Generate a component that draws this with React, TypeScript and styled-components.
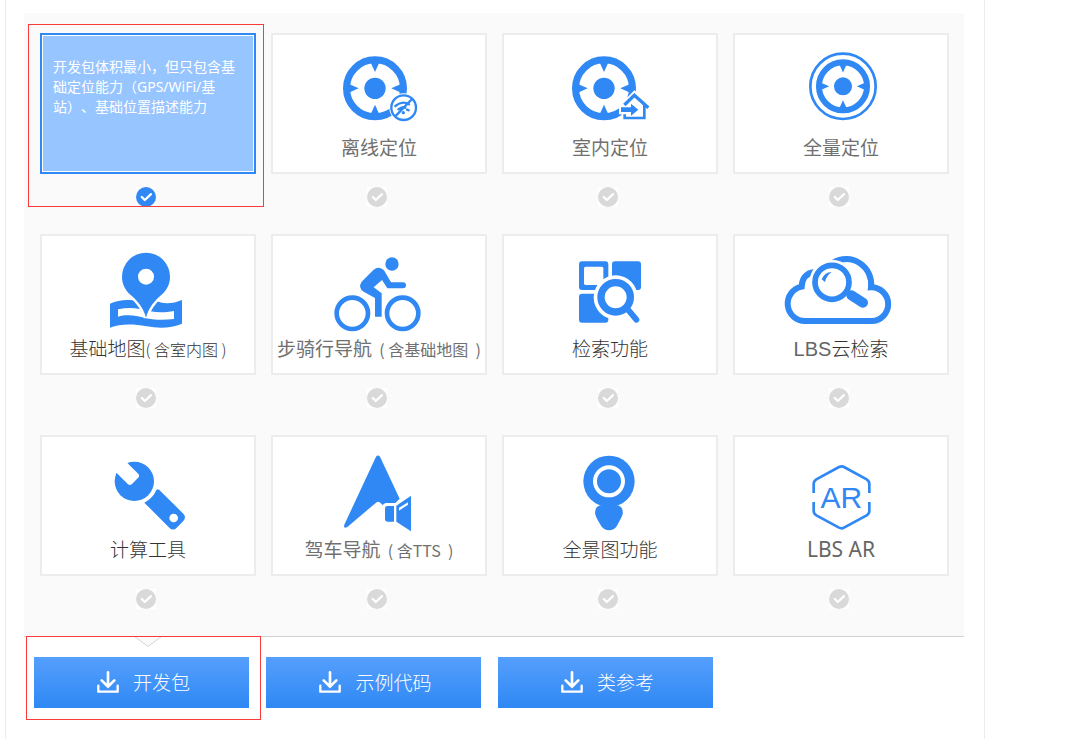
import React, { useState } from "react";
import styled, { createGlobalStyle, css } from "styled-components";

const BLUE = "#2f88f4";
const SANS = '"Noto Sans", "Noto Sans CJK SC", sans-serif';

const GlobalStyle = createGlobalStyle`
  *, *::before, *::after { box-sizing: border-box; }
  body { margin: 0; background: #fff; font-family: ${SANS}; }
`;

const Frame = styled.main`
  max-width: 980px;
  min-height: 100vh;
  margin-left: 5px;
  padding: 13px 20px 31px 18px;
  border: solid #ececec;
  border-width: 0 1px;
`;

const Panel = styled.section`
  display: grid;
  grid-template-columns: repeat(4, minmax(0, 1fr));
  gap: 27px 15px;
  padding: 20px 15px 27px 16px;
  background: #fafafa;
  border-bottom: 1px solid #d2d2d2;
`;

const Option = styled.label`
  position: relative;
  display: flex;
  flex-direction: column;
  cursor: pointer;
`;

const Card = styled.span<{ $selected?: boolean }>`
  display: flex;
  flex-direction: column;
  height: 141px;
  overflow: hidden;
  background: #fff;
  border: 2px solid ${(p) => (p.$selected ? BLUE : "#ececec")};
  ${(p) => p.$selected && css`padding: 1px;`}
`;

const Description = styled.span`
  flex: 1;
  padding: 21px 10px 0;
  background: #97c5ff;
  color: #fff;
  font-size: 14px;
  line-height: 20px;
  text-spacing-trim: space-all;
`;

const Drawing = styled.svg`
  flex: none;
  width: 100%;
  height: 98px;
  fill: ${BLUE};
`;

const Caption = styled.span<{ $strong?: boolean }>`
  display: flex;
  align-items: baseline;
  justify-content: center;
  color: ${(p) => (p.$strong ? "#707070" : "#333")};
  font-family: "Noto Sans CJK SC", sans-serif;
  font-size: 19px;
  font-weight: ${(p) => (p.$strong ? 400 : 300)};
  line-height: 28px;
  white-space: pre;
`;

const Note = styled.span`
  font-size: 16px;
`;

const Latin = styled.span<{ $family: string; $size: number }>`
  color: #666;
  font-family: ${(p) => p.$family};
  font-size: ${(p) => p.$size}px;
  font-weight: 400;
`;

const tick = (fill: string) =>
  `url("data:image/svg+xml,%3Csvg xmlns='http://www.w3.org/2000/svg' viewBox='0 0 20 20'%3E%3Ccircle cx='10' cy='10' r='10' fill='%23${fill}'/%3E%3Cpath d='M5.8 10 8.8 13 15 7.2' fill='none' stroke='%23fff' stroke-width='2.3' stroke-linecap='round' stroke-linejoin='round'/%3E%3C/svg%3E")`;

const Tick = styled.input`
  appearance: none;
  align-self: center;
  width: 20px;
  height: 20px;
  margin: 13px 4px 0 0;
  background: #fff ${tick("d9d9d9")} center / 20px;
  cursor: pointer;
  &:checked { background-image: ${tick("2f88f4")}; }
`;

const Highlight = styled.span<{ $inset: string }>`
  position: absolute;
  inset: ${(p) => p.$inset};
  border: 1px solid #fb3b3b;
  pointer-events: none;
`;

const Notch = styled.svg`
  display: block;
  width: 28px;
  height: 10px;
  margin-left: 110px;
`;

const Actions = styled.div`
  display: flex;
  gap: 17px;
  padding: 10px 0 0 10px;
`;

const Slot = styled.div`
  position: relative;
  flex: 0 1 215px;
`;

const Download = styled.button`
  display: flex;
  align-items: center;
  justify-content: center;
  gap: 14px;
  width: 100%;
  height: 51px;
  padding: 0 0 2px 4px;
  border: 0;
  background: linear-gradient(#559ffd, ${BLUE});
  color: #fff;
  font-family: "Noto Sans CJK SC", sans-serif;
  font-size: 19px;
  font-weight: 300;
  line-height: 28px;
  white-space: nowrap;
  cursor: pointer;
`;

const Target = ({ x, y, s = 1 }: { x: number; y: number; s?: number }) => (
  <g transform={`translate(${x} ${y}) scale(${s})`}>
    <circle r="85.5" fill="none" stroke={BLUE} strokeWidth="21" />
    <circle r="32" />
    {[0, 90, 180, 270].map((a) => (
      <path key={a} d="M-14-80 0-49 14-80Z" transform={`rotate(${a})`} />
    ))}
  </g>
);

const Offline = () => (
  <Drawing viewBox="24 30 636 294" aria-hidden>
    <Target x={330} y={190} />
    <circle cx="416" cy="248" r="43" fill="#fff" />
    <g fill="none" stroke={BLUE} strokeWidth="7" strokeLinecap="round">
      <circle cx="416" cy="248" r="37" />
      <path d="M391 243Q412 226 432 238M400 253Q412 243 421 248M426 254 431 256M393 272 441 222" />
    </g>
    <circle cx="415" cy="263" r="5" />
  </Drawing>
);

const Indoor = () => (
  <Drawing viewBox="27 30 636 294" aria-hidden>
    <Target x={327} y={190} />
    <path d="M372 242 418 196 470 246V290H380V268H372Z" fill="#fff" />
    <path d="M388 240 418 211 460 248" fill="none" stroke={BLUE} strokeWidth="10" />
    <path d="M448 240V279H389V268" fill="none" stroke={BLUE} strokeWidth="8" />
    <path d="M378 247H408V236L430 254 408 272V261H378Z" stroke="#fff" strokeWidth="4" paintOrder="stroke" />
  </Drawing>
);

const Full = () => (
  <Drawing viewBox="30 30 636 294" aria-hidden>
    <Target x={354} y={184} s={0.845} />
    <circle cx="354" cy="184" r="98" fill="none" stroke={BLUE} strokeWidth="8" />
  </Drawing>
);

const BaseMap = () => (
  <Drawing viewBox="36 33 636 294" aria-hidden>
    <path
      fillRule="evenodd"
      d="M240 236C262 226 285 223 310 226H375C400 240 430 236 456 225V296C425 309 390 311 350 304C305 296 270 297 240 308ZM264 253V275C295 266 325 274 350 280C380 286 405 285 432 282V258C405 263 385 263 360 259L325 251C305 248 285 249 264 253Z"
    />
    <path
      fillRule="evenodd"
      stroke="#fff"
      strokeWidth="14"
      paintOrder="stroke"
      d="M348 278C340 246 318 224 303 211C286 196 276 178 276 155A72 72 0 0 1 420 155C420 178 410 196 393 211C378 224 356 246 348 278Z"
    />
    <circle cx="348" cy="155" r="24" fill="#fff" />
  </Drawing>
);

const Cycling = () => (
  <Drawing viewBox="24 33 636 294" aria-hidden>
    <g fill="none" stroke={BLUE} strokeWidth="14">
      <circle cx="262" cy="265" r="47" />
      <circle cx="413" cy="265" r="47" />
    </g>
    <circle cx="381" cy="117" r="20" />
    <path d="M325 135Q342 121 357 136L378 172H414A9 9 0 0 1 414 190H367L351 165 326 187 350 205V275H330V219L296 200Q278 188 290 170Z" />
  </Drawing>
);

const Search = () => (
  <Drawing viewBox="27 33 636 294" aria-hidden>
    <rect x="252" y="109" width="88" height="86" rx="9" />
    <rect x="267" y="125" width="58" height="55" rx="5" fill="#fff" />
    <rect x="351" y="109" width="87" height="86" rx="9" />
    <rect x="252" y="206" width="88" height="87" rx="9" />
    <circle cx="362" cy="217" r="66" fill="#fff" />
    <circle cx="362" cy="217" r="44" fill="none" stroke={BLUE} strokeWidth="22" />
    <path d="M399 254 424 284" stroke={BLUE} strokeWidth="18" strokeLinecap="round" />
  </Drawing>
);

const CloudSearch = () => (
  <Drawing viewBox="30 33 636 294" aria-hidden>
    <path
      d="M325 113A75 75 0 0 1 438 187A50 50 0 0 1 440 288H241A52 52 0 0 1 230 185Q232 146 268 141"
      fill="none"
      stroke={BLUE}
      strokeWidth="18"
    />
    <circle cx="321" cy="172" r="68" fill="#fff" />
    <circle cx="321" cy="172" r="51" fill="none" stroke={BLUE} strokeWidth="17" />
    <path d="M360 198 378 209" stroke={BLUE} strokeWidth="12" />
    <path d="M379 211 414 233" stroke={BLUE} strokeWidth="30" strokeLinecap="round" />
    <path d="M290 163Q298 142 320 141Q304 152 300 171Z" />
  </Drawing>
);

const Wrench = () => (
  <Drawing viewBox="36 21 636 294" aria-hidden>
    <circle cx="313" cy="154" r="59" />
    <path d="M277 84 326 133Q329 138 326 142L306 162Q300 168 294 163L245 114Z" fill="#fff" />
    <path
      fillRule="evenodd"
      d="M379 180Q383 175 388 180L460 251Q470 262 460 273L440 293Q429 304 418 293L343 218Q369 205 379 180ZM431 251A13 13 0 1 0 431 277A13 13 0 1 0 431 251Z"
    />
  </Drawing>
);

const Driving = () => (
  <Drawing viewBox="729 21 636 294" aria-hidden>
    <path d="M1038 80Q1044 73 1050 80L1109 206 1096 219H1066L1058 225 1049 217Q1044 213 1038 218L952 291Q939 297 943 284Z" />
    <path d="M1092 228H1072Q1065 228 1065 235V268Q1065 275 1072 275H1092ZM1099 227 1143 197V304L1099 275Z" />
    <path d="M1107 233 1134 217V224L1107 242Z" fill="#fff" />
  </Drawing>
);

const Panorama = () => (
  <Drawing viewBox="27 21 636 294" aria-hidden>
    <circle cx="342" cy="154" r="77" />
    <circle cx="342" cy="154" r="42" fill="none" stroke="#fff" strokeWidth="12" />
    <path d="M316 226Q297 232 301 254C305 266 313 278 319 289Q328 301 342 301Q357 301 365 289C371 278 380 263 383 253Q386 232 368 226Z" />
  </Drawing>
);

const AugmentedReality = () => (
  <Drawing viewBox="720 21 636 294" aria-hidden>
    <path
      d="M956 189V162Q956 153 964 148L1032 111Q1040 107 1047 111L1115 148Q1123 153 1123 162V189M956 216V243Q956 251 964 256L1032 293Q1040 297 1047 293L1115 256Q1123 251 1123 243V216"
      fill="none"
      stroke={BLUE}
      strokeWidth="8"
    />
    <text x="1039" y="235" textAnchor="middle" fontFamily="Liberation Sans, sans-serif" fontSize="90">AR</text>
  </Drawing>
);

const DownloadIcon = () => (
  <svg width="22" height="22" viewBox="0 0 66 66" fill="none" stroke="#fff" aria-hidden>
    <path d="M33 4V46M14 28 33 47 52 28" strokeWidth="8" strokeLinecap="round" />
    <path d="M4 44V62H62V44" strokeWidth="7" strokeLinecap="round" strokeLinejoin="round" />
  </svg>
);

type Feature = {
  id: string;
  strong?: boolean;
  art: React.ReactNode;
  caption: React.ReactNode;
};

const features: Feature[] = [
  { id: "offline", strong: true, art: <Offline />, caption: "离线定位" },
  { id: "indoor", strong: true, art: <Indoor />, caption: "室内定位" },
  { id: "full", strong: true, art: <Full />, caption: "全量定位" },
  { id: "map", art: <BaseMap />, caption: <>基础地图<Note>( 含室内图 )</Note></> },
  { id: "cycling", strong: true, art: <Cycling />, caption: <>步骑行导航<Note>{"  ( 含基础地图  )"}</Note></> },
  { id: "search", art: <Search />, caption: "检索功能" },
  {
    id: "cloud",
    art: <CloudSearch />,
    caption: <><Latin $family='"Liberation Sans", sans-serif' $size={20}>LBS</Latin>云检索</>,
  },
  { id: "tools", art: <Wrench />, caption: "计算工具" },
  { id: "driving", strong: true, art: <Driving />, caption: <>驾车导航<Note>{"  ( 含TTS  )"}</Note></> },
  { id: "panorama", art: <Panorama />, caption: "全景图功能" },
  {
    id: "ar",
    art: <AugmentedReality />,
    caption: <Latin $family={SANS} $size={21}>LBS AR</Latin>,
  },
];

export default function App() {
  const [picked, setPicked] = useState<string[]>(["basic"]);
  const toggle = (id: string) =>
    setPicked((now) => (now.includes(id) ? now.filter((p) => p !== id) : [...now, id]));

  return (
    <>
      <GlobalStyle />
      <Frame>
        <Panel>
          <Option>
            <Card $selected>
              <Description>
                开发包体积最小，但只包含基础定位能力（GPS/WiFi/基站）、基础位置描述能力
              </Description>
            </Card>
            <Tick type="checkbox" checked={picked.includes("basic")} onChange={() => toggle("basic")} />
            <Highlight $inset="-9px -8px 0 -12px" />
          </Option>
          {features.map((f) => (
            <Option key={f.id}>
              <Card>
                {f.art}
                <Caption $strong={f.strong}>{f.caption}</Caption>
              </Card>
              <Tick type="checkbox" checked={picked.includes(f.id)} onChange={() => toggle(f.id)} />
            </Option>
          ))}
        </Panel>
        <Notch viewBox="0 0 28 10" aria-hidden>
          <path d="M1 0 14 9.5 27 0" fill="#fafafa" stroke="#d6d6d6" />
        </Notch>
        <Actions>
          <Slot>
            <Download type="button"><DownloadIcon />开发包</Download>
            <Highlight $inset="-21px -12px -12px -8px" />
          </Slot>
          <Slot>
            <Download type="button"><DownloadIcon />示例代码</Download>
          </Slot>
          <Slot>
            <Download type="button"><DownloadIcon />类参考</Download>
          </Slot>
        </Actions>
      </Frame>
    </>
  );
}
